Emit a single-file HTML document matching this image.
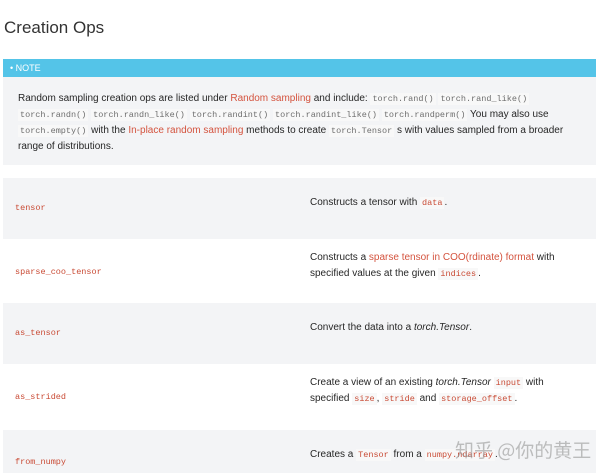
<!DOCTYPE html>
<html><head><meta charset="utf-8"><style>
body{margin:0;background:#fff;font-family:"Liberation Sans",sans-serif;color:#262626;width:600px;height:473px;overflow:hidden;position:relative}
.t{position:absolute;left:4px;top:18px;font-size:17px;color:#333}
.nh{position:absolute;left:3px;top:59px;width:593px;height:18px;background:#54c4e8;color:#fff;font-size:9px;line-height:18px}
.nh span{margin-left:7px}
.nb{position:absolute;left:3px;top:77px;width:593px;height:88px;background:#f3f4f6}
.nb p{margin:14px 15px 0 15px;font-size:10px;line-height:16px}
code{font-family:"Liberation Mono",monospace;font-size:8.5px;background:#f8f8f8;padding:1px 2px;color:#6e6e6e}
a{color:#d4533e;text-decoration:none}
.r{position:absolute;left:3px;width:593px}
.g{background:#f3f4f6}
.l{position:absolute;left:12px;font-family:"Liberation Mono",monospace;font-size:8.5px;color:#c94b35}
.d{position:absolute;left:307px;font-size:10px;line-height:16px;width:270px}
.d code{color:#c94b35}
.wm{position:absolute;left:455px;top:436px;font-size:19px;color:rgba(150,150,150,0.6);font-family:"Noto Sans CJK SC",sans-serif}
</style></head><body>
<div class="t">Creation Ops</div>
<div class="nh"><span>• NOTE</span></div>
<div class="nb"><p>Random sampling creation ops are listed under <a>Random sampling</a> and include: <code>torch.rand()</code> <code>torch.rand_like()</code> <code>torch.randn()</code> <code>torch.randn_like()</code> <code>torch.randint()</code> <code>torch.randint_like()</code> <code>torch.randperm()</code> You may also use <code>torch.empty()</code> with the <a>In-place random sampling</a> methods to create <code>torch.Tensor</code> s with values sampled from a broader range of distributions.</p></div>

<div class="r g" style="top:178px;height:61px"><span class="l" style="top:25px">tensor</span><div class="d" style="top:17px">Constructs a tensor with <code>data</code>.</div></div>
<div class="r" style="top:239px;height:64px"><span class="l" style="top:28px">sparse_coo_tensor</span><div class="d" style="top:11px">Constructs a <a>sparse tensor in COO(rdinate) format</a> with specified values at the given <code>indices</code>.</div></div>
<div class="r g" style="top:303px;height:61px"><span class="l" style="top:25px">as_tensor</span><div class="d" style="top:17px">Convert the data into a <i>torch.Tensor</i>.</div></div>
<div class="r" style="top:364px;height:66px"><span class="l" style="top:28px">as_strided</span><div class="d" style="top:11px">Create a view of an existing <i>torch.Tensor</i> <code>input</code> with specified <code>size</code>, <code>stride</code> and <code>storage_offset</code>.</div></div>
<div class="r g" style="top:430px;height:43px"><span class="l" style="top:27px">from_numpy</span><div class="d" style="top:17px">Creates a <code>Tensor</code> from a <code>numpy.ndarray</code>.</div></div>
<div class="wm">知乎 @你的黄王</div>
</body></html>
